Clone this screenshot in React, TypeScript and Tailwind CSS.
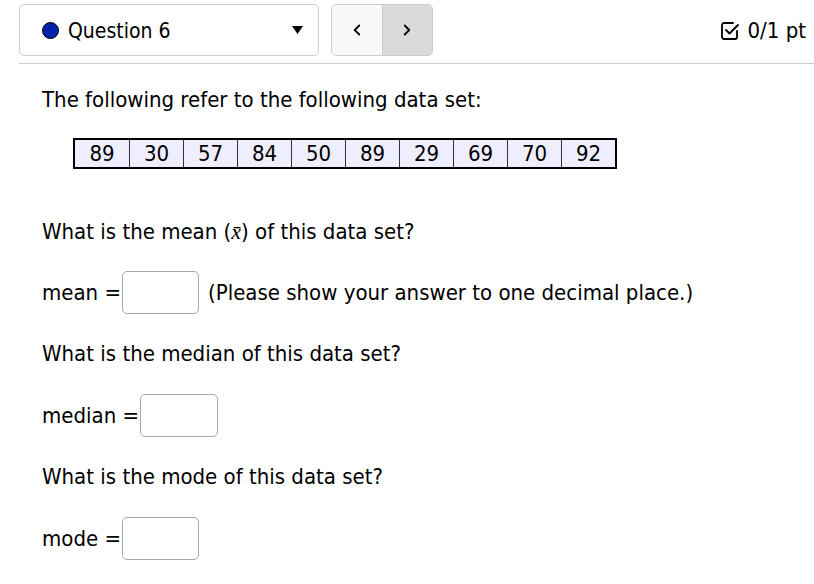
import { ChevronLeft, ChevronRight } from 'lucide-react';

const data = [89, 30, 57, 84, 50, 89, 29, 69, 70, 92];

function AnswerBox({ width }: { width: string }) {
  return <div className={`${width} h-[43px] rounded-[5px] border border-[#a9a9a9] bg-white`}></div>;
}

export default function App() {
  return (
    <div className="min-h-[584px] bg-white text-[22px] leading-6 text-black" style={{ fontFamily: '"DejaVu Sans Condensed", "DejaVu Sans", sans-serif' }}>
      {/* header */}
      <div className="ml-[19px] flex items-start border-b border-[#cccccc] pt-[4px] pb-[7px]">
        <div className="flex h-[52px] w-[300px] items-center rounded-[5px] border border-[#cccccc] pl-[22px] pr-[15px]">
          <span className="h-[17px] w-[17px] rounded-full border-[1.5px] border-black bg-[#0022aa]"></span>
          <span className="ml-[9px] flex-1 pt-[1px] text-[21px]">Question 6</span>
          <svg width="11" height="8" viewBox="0 0 11 8">
            <path d="M0 0 L11 0 L5.5 8 Z" fill="#000" />
          </svg>
        </div>
        <div className="ml-[12px] flex h-[52px] w-[102px] overflow-hidden rounded-[5px] border border-[#cccccc]">
          <div className="flex flex-1 items-center justify-center border-r border-[#cccccc] bg-[#f8f8f8]">
            <ChevronLeft size={18} strokeWidth={2.5} />
          </div>
          <div className="flex flex-1 items-center justify-center bg-[#dadada]">
            <ChevronRight size={18} strokeWidth={2.5} />
          </div>
        </div>
        <div className="ml-auto mr-[8px] flex h-[52px] items-center gap-[8px] pt-[2px]">
          <svg width="20" height="20" viewBox="0 0 20 20" fill="none" stroke="#000" strokeWidth="1.8" strokeLinecap="round" strokeLinejoin="round">
            <path d="M17 10v6a2 2 0 0 1-2 2H4a2 2 0 0 1-2-2V4a2 2 0 0 1 2-2h9" />
            <path d="M6 9l3.5 3.5L18 4" />
          </svg>
          <span>0/1 pt</span>
        </div>
      </div>

      {/* body */}
      <div className="pl-[42px]">
        <p className="mt-[24px]">The following refer to the following data set:</p>
        <div className="ml-[31px] mt-[26px] flex w-fit border-2 border-black bg-[#eeeeff]">
          {data.map((n, i) => (
            <div key={i} className={`flex h-[27px] w-[54px] items-center justify-center ${i > 0 ? 'border-l border-[#333333]' : ''}`}>
              {n}
            </div>
          ))}
        </div>

        <p className="mt-[51px]">
          What is the mean (<span className="italic" style={{ fontFamily: '"Liberation Serif", serif' }}>x̄</span>) of this data set?
        </p>
        <div className="mt-[27px] flex items-center">
          <span>mean =</span>
          <span className="ml-[1px]"><AnswerBox width="w-[77px]" /></span>
          <span className="ml-[9px]">(Please show your answer to one decimal place.)</span>
        </div>

        <p className="mt-[28px]">What is the median of this data set?</p>
        <div className="mt-[28px] flex items-center">
          <span>median =</span>
          <span className="ml-[1px]"><AnswerBox width="w-[78px]" /></span>
        </div>

        <p className="mt-[28px]">What is the mode of this data set?</p>
        <div className="mt-[28px] flex items-center">
          <span>mode =</span>
          <span className="ml-[1px]"><AnswerBox width="w-[77px]" /></span>
        </div>
      </div>
    </div>
  );
}
